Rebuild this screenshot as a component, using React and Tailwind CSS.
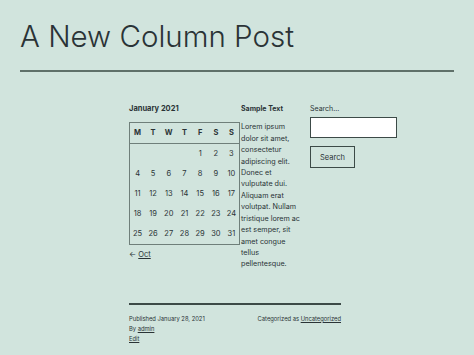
const days = [
  ['', '', '', '', '1', '2', '3'],
  ['4', '5', '6', '7', '8', '9', '10'],
  ['11', '12', '13', '14', '15', '16', '17'],
  ['18', '19', '20', '21', '22', '23', '24'],
  ['25', '26', '27', '28', '29', '30', '31'],
];

const heads = ['M', 'T', 'W', 'T', 'F', 'S', 'S'];

function Calendar() {
  return (
    <div className="w-[111px]">
      <div className="text-[7.5px] font-bold leading-none">January 2021</div>
      <table className="mt-[9px] w-[111px] border border-[#6f7f7a] border-collapse text-[7.5px] table-fixed">
        <thead>
          <tr className="h-[21px] border-b border-[#6f7f7a]">
            {heads.map((h, i) => (
              <th key={i} className="font-bold text-center">{h}</th>
            ))}
          </tr>
        </thead>
        <tbody>
          {days.map((row, r) => (
            <tr key={r} className="h-[20.2px]">
              {row.map((d, i) => (
                <td key={i} className="text-center">{d}</td>
              ))}
            </tr>
          ))}
        </tbody>
      </table>
      <div className="mt-[4px] text-[7.5px]">
        ← <span className="underline">Oct</span>
      </div>
    </div>
  );
}

export default function App() {
  return (
    <div className="min-h-screen bg-[#d1e4dd] text-[#2a3336] font-['Inter',sans-serif] pb-4">
      <h1 className="px-5 pt-[20px] text-[29.5px] font-light leading-[1.1]">A New Column Post</h1>
      <div className="mx-5 mt-[18px] h-[2px] bg-[#5f7069]"></div>

      <div className="ml-[129px] mt-[33px] flex">
        <Calendar />
        <div className="ml-[1px] w-[60px]">
          <div className="text-[7px] font-bold leading-none">Sample Text</div>
          <p className="mt-[9px] text-[7.2px] leading-[11.4px]">
            Lorem ipsum dolor sit amet, consectetur adipiscing elit. Donec et vulputate dui. Aliquam erat volutpat. Nullam tristique lorem ac est semper, sit amet congue tellus pellentesque.
          </p>
        </div>
        <div className="ml-[9px]">
          <div className="text-[7px] leading-none">Search...</div>
          <div className="mt-[5px] w-[87px] h-[21px] bg-white border-[1.5px] border-[#3c4a47]"></div>
          <button className="mt-[8px] w-[45px] h-[22px] border-[1.5px] border-[#3c4a47] text-[7.5px]">Search</button>
        </div>
      </div>

      <div className="ml-[129px] mt-[33px] w-[212px]">
        <div className="h-[2px] bg-[#3c4a47]"></div>
        <div className="mt-[9px] flex justify-between text-[5.8px] leading-[10px]">
          <div>
            <div>Published January 28, 2021</div>
            <div>By <span className="underline">admin</span></div>
            <div className="underline">Edit</div>
          </div>
          <div>Categorized as <span className="underline">Uncategorized</span></div>
        </div>
      </div>
    </div>
  );
}
